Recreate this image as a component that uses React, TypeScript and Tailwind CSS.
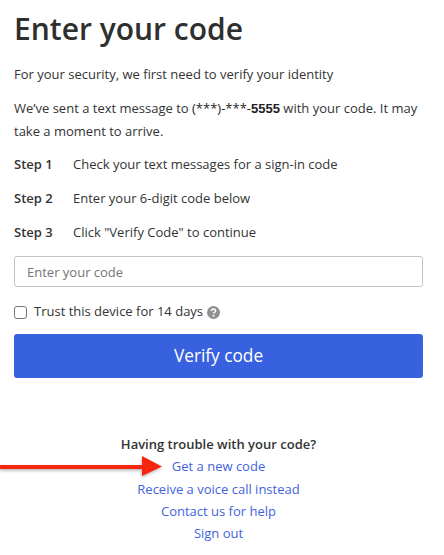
export default function App() {
  return (
    <div className="w-[444px] h-[555px] overflow-hidden bg-white text-[#333333] font-['Open_Sans',sans-serif] relative">
      <div className="pl-[14px] pr-[21px] pt-[9px]">
        <h1 className="text-[30px] leading-[40px] font-semibold text-[#2f2f2f]">Enter your code</h1>
        <p className="mt-[15px] text-[13px] leading-[20px]">For your security, we first need to verify your identity</p>
        <p className="mt-[13px] text-[13px] leading-[22px]">
          We’ve sent a text message to <span className="font-medium text-[#222222]">(***)-***-</span><span className="font-['Liberation_Sans',sans-serif] font-bold text-[#222222]">5555</span> with your code. It may take a moment to arrive.
        </p>
        <div className="mt-[12px] flex flex-col gap-[14px] text-[13px] leading-[20px]">
          {[
            ["Step 1", "Check your text messages for a sign-in code"],
            ["Step 2", "Enter your 6-digit code below"],
            ["Step 3", 'Click "Verify Code" to continue'],
          ].map(([a, b]) => (
            <div key={a} className="flex">
              <span className="w-[59px] font-semibold">{a}</span>
              <span>{b}</span>
            </div>
          ))}
        </div>
        <input
          placeholder="Enter your code"
          className="mt-[14px] block w-full h-[31px] rounded-[3px] border border-[#c4c4c4] px-[12px] text-[13px] placeholder:text-[#757575] outline-none"
        />
        <div className="mt-[15px] flex items-center h-[20px] text-[13px]">
          <span className="w-[13px] h-[13px] rounded-[3px] border border-[#767676] mr-[7px]" />
          <span>Trust this device for 14 days</span>
          <svg className="ml-[4px]" width="13" height="13" viewBox="0 0 13 13">
            <circle cx="6.5" cy="6.5" r="6.5" fill="#8f8f8f" />
            <path d="M4.4 5a2.1 2 0 0 1 4.2 0c0 1.3-2.1 1.4-2.1 2.6" fill="none" stroke="#fff" strokeWidth="1.5" />
            <rect x="5.6" y="8.8" width="1.8" height="1.7" fill="#fff" />
          </svg>
        </div>
        <button className="mt-[12px] block w-full h-[44px] rounded-[3px] bg-[#3761de] text-white text-[17.25px]">Verify code</button>
        <div className="mt-[55px] flex flex-col items-center text-[13px] leading-[22.25px] text-[#3f63dd]">
          <div className="font-semibold text-[#333333]">Having trouble with your code?</div>
          <a>Get a new code</a>
          <a>Receive a voice call instead</a>
          <a>Contact us for help</a>
          <a>Sign out</a>
        </div>
      </div>
      <svg className="absolute left-0 top-[452px]" width="170" height="34" viewBox="0 0 170 34">
        <defs>
          <filter id="s" x="-10%" y="-50%" width="120%" height="200%">
            <feDropShadow dx="-0.5" dy="1.5" stdDeviation="1.5" floodColor="#000" floodOpacity="0.3" />
          </filter>
        </defs>
        <path d="M0 13H142V4L162 14.5L142 24V17H0Z" fill="#f5260f" filter="url(#s)" />
      </svg>
    </div>
  );
}
